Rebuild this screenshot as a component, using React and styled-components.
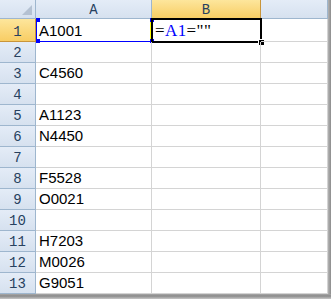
import styled, { createGlobalStyle, css } from 'styled-components';

const GlobalStyle = createGlobalStyle`
  html, body { margin: 0; padding: 0; background: #ffffff; }
  body { font-family: "Liberation Sans", Arial, sans-serif; }
`;

const rows = [
  'A1001', '', 'C4560', '', 'A1123', 'N4450', '', 'F5528', 'O0021', '', 'H7203', 'M0026', 'G9051',
];

const Frame = styled.div`
  width: 331px;
  height: 299px;
  display: grid;
  grid-template-columns: 328px 3px;
  grid-template-rows: 294px 5px;
  overflow: hidden;
`;

const Sheet = styled.div`
  display: grid;
  grid-template-columns: 36px 116px 109px 67px;
  grid-template-rows: 19px 23px repeat(12, 21px);
  background: #fff;
`;

const ShadowRight = styled.div`
  background: linear-gradient(to right, #b4b4b4, #8c8c8c);
`;

const ShadowBottom = styled.div`
  grid-column: 1 / span 2;
  background: linear-gradient(to bottom, #a8a8a8, #8a8a8a 40%, #c8c8c8);
`;

const headerFill = css`
  background: linear-gradient(to bottom, #e4ecf7, #d6e1ef);
  color: #27415f;
  font-family: "Liberation Mono", "Courier New", monospace;
  font-size: 14px;
`;

const selectedFill = css`
  background: linear-gradient(to bottom, #fde69c, #f8cd64);
`;

const Corner = styled.div`
  ${headerFill};
  position: relative;
  box-sizing: border-box;
  border-right: 1px solid #9eb6ce;
  border-bottom: 1px solid #9eb6ce;
  &::after {
    content: "";
    position: absolute;
    right: 3px;
    bottom: 3px;
    border-style: solid;
    border-width: 0 0 10px 10px;
    border-color: transparent transparent #b4c1d2 transparent;
  }
`;

const ColHead = styled.div`
  ${headerFill};
  ${(p) => p.$active && selectedFill};
  box-sizing: border-box;
  border-right: 1px solid ${(p) => (p.$active ? '#c9953a' : '#9eb6ce')};
  border-bottom: 1px solid ${(p) => (p.$active ? '#c9953a' : '#9eb6ce')};
  display: flex;
  align-items: center;
  justify-content: center;
  padding-top: 1px;
`;

const RowHead = styled.div`
  ${headerFill};
  ${(p) => p.$active && selectedFill};
  box-sizing: border-box;
  border-right: 1px solid ${(p) => (p.$active ? '#c9953a' : '#9eb6ce')};
  border-bottom: 1px solid ${(p) => (p.$active ? '#c9953a' : '#9eb6ce')};
  display: flex;
  align-items: flex-end;
  justify-content: center;
  padding-bottom: 2px;
  line-height: 1;
`;

const Cell = styled.div`
  position: relative;
  box-sizing: border-box;
  border-right: 1px solid #d4d4d4;
  border-bottom: 1px solid #d4d4d4;
  display: flex;
  align-items: flex-end;
  padding: 0 0 3px 3px;
  font-family: "Liberation Sans", Arial, sans-serif;
  font-size: 15px;
  line-height: 1;
  color: #000;
  white-space: nowrap;
`;

const RefBox = styled.div`
  position: absolute;
  left: 0;
  top: 0;
  right: -1px;
  bottom: -1px;
  border-bottom: 1px solid #0000ff;
  border-left: 1px solid #0000ff;
  pointer-events: none;
`;

const RefEdge = styled.div`
  position: absolute;
  top: 0;
  bottom: 0;
  right: 0;
  width: 2px;
  background: #ffff00;
`;

const Dot = styled.div`
  position: absolute;
  width: 4px;
  height: 4px;
  background: #0000ff;
  ${(p) => (p.$top ? 'top: -1px;' : 'bottom: -2px;')}
  ${(p) => (p.$left ? 'left: -1px;' : 'right: -2px;')}
`;

const ActiveBox = styled.div`
  position: absolute;
  left: -1px;
  top: -1px;
  right: -2px;
  bottom: -2px;
  border: 2px solid #000;
  pointer-events: none;
`;

const FillHandle = styled.div`
  position: absolute;
  right: -4px;
  bottom: -4px;
  width: 5px;
  height: 5px;
  background: #000;
  border-left: 1px solid #fff;
  border-top: 1px solid #fff;
`;

const Formula = styled.span`
  font-family: "Liberation Serif", "Times New Roman", serif;
  font-size: 17px;
  letter-spacing: 0.4px;
  color: #000;
  margin-bottom: -1px;
`;

const Ref = styled.span`
  color: #0000ff;
`;

export default function App() {
  return (
    <>
      <GlobalStyle />
      <Frame>
        <Sheet>
          <Corner />
          <ColHead>A</ColHead>
          <ColHead $active>B</ColHead>
          <ColHead />
          {rows.map((v, i) => {
            const n = i + 1;
            return [
              <RowHead key={`h${n}`} $active={n === 1}>{n}</RowHead>,
              <Cell key={`a${n}`}>
                {v}
                {n === 1 && (
                  <RefBox>
                    <RefEdge />
                    <Dot $top $left />
                    <Dot $left />
                    <Dot $top />
                    <Dot />
                  </RefBox>
                )}
              </Cell>,
              <Cell key={`b${n}`}>
                {n === 1 && (
                  <>
                    <Formula>=<Ref>A1</Ref>=""</Formula>
                    <ActiveBox>
                      <FillHandle />
                    </ActiveBox>
                  </>
                )}
              </Cell>,
              <Cell key={`c${n}`} />,
            ];
          })}
        </Sheet>
        <ShadowRight />
        <ShadowBottom />
      </Frame>
    </>
  );
}
